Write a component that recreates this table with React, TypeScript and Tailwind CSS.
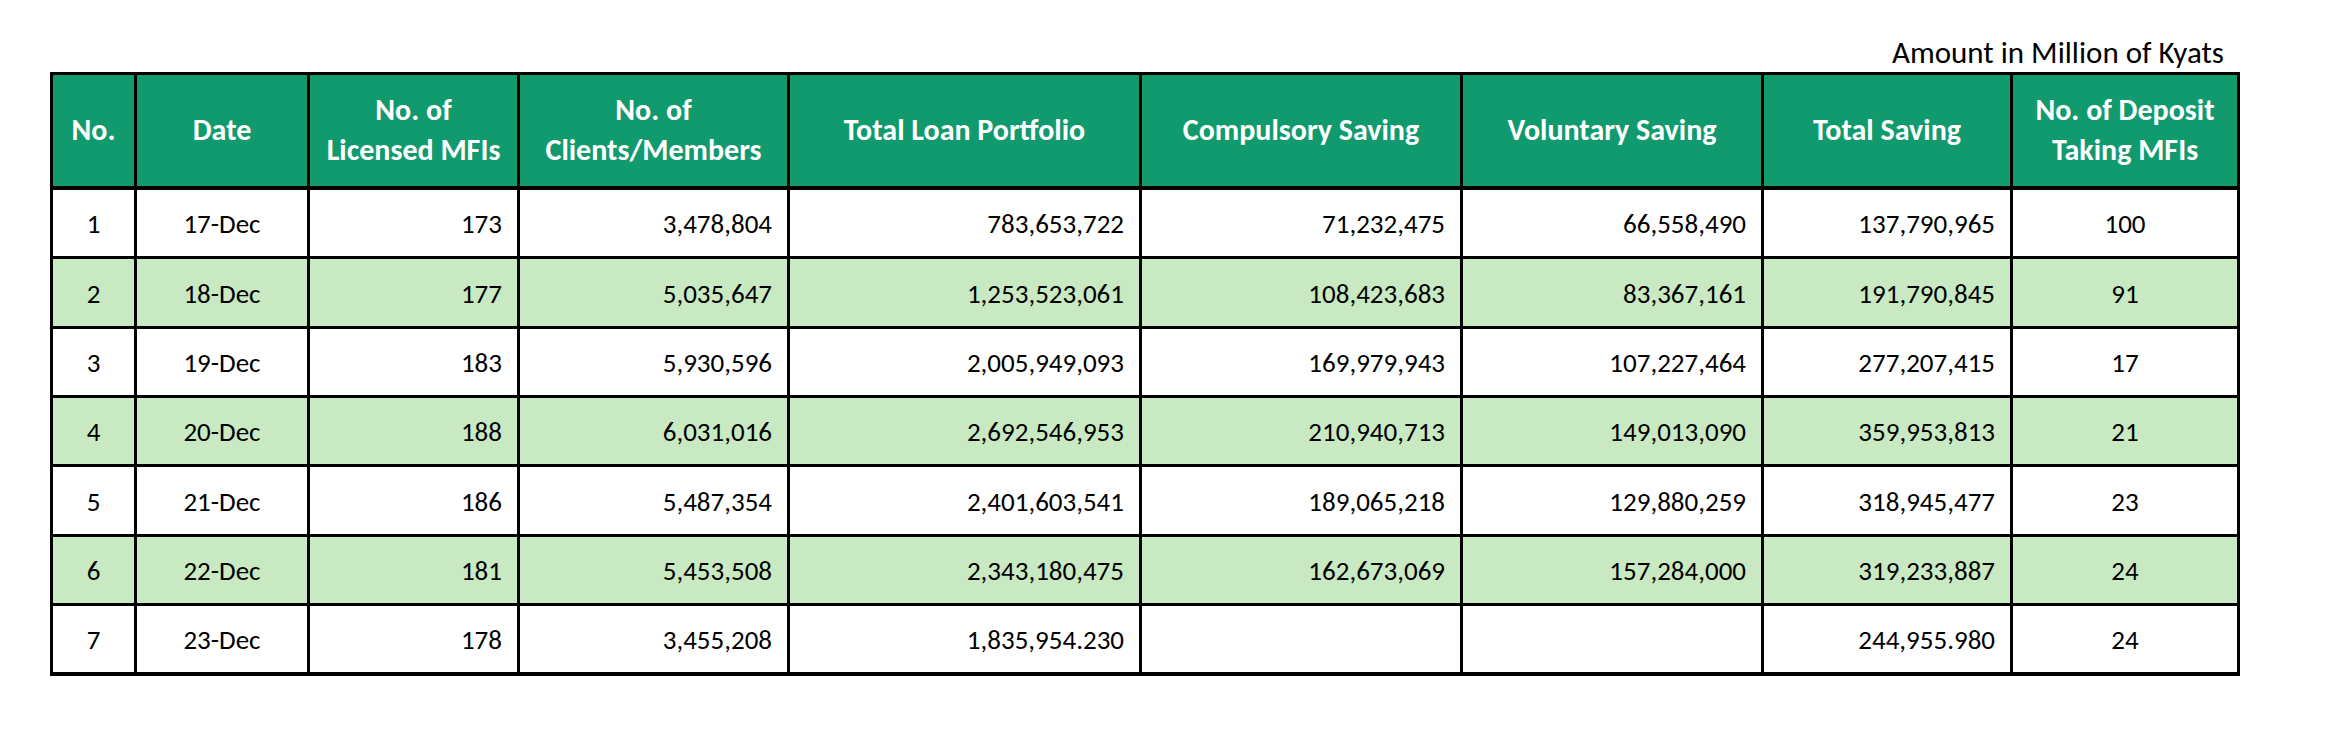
const headers: string[][] = [
  ["No."],
  ["Date"],
  ["No. of", "Licensed MFIs"],
  ["No. of", "Clients/Members"],
  ["Total Loan Portfolio"],
  ["Compulsory Saving"],
  ["Voluntary Saving"],
  ["Total Saving"],
  ["No. of Deposit", "Taking MFIs"],
];

// which columns are right-aligned in the body
const rightCols = [2, 3, 4, 5, 6, 7];

const rows: string[][] = [
  ["1", "17-Dec", "173", "3,478,804", "783,653,722", "71,232,475", "66,558,490", "137,790,965", "100"],
  ["2", "18-Dec", "177", "5,035,647", "1,253,523,061", "108,423,683", "83,367,161", "191,790,845", "91"],
  ["3", "19-Dec", "183", "5,930,596", "2,005,949,093", "169,979,943", "107,227,464", "277,207,415", "17"],
  ["4", "20-Dec", "188", "6,031,016", "2,692,546,953", "210,940,713", "149,013,090", "359,953,813", "21"],
  ["5", "21-Dec", "186", "5,487,354", "2,401,603,541", "189,065,218", "129,880,259", "318,945,477", "23"],
  ["6", "22-Dec", "181", "5,453,508", "2,343,180,475", "162,673,069", "157,284,000", "319,233,887", "24"],
  ["7", "23-Dec", "178", "3,455,208", "1,835,954.230", "", "", "244,955.980", "24"],
];

export default function App() {
  return (
    <div
      className="w-[2338px] h-[745px] bg-white text-black"
      style={{ fontFamily: "Carlito, Calibri, Lato, 'Open Sans', sans-serif" }}
    >
      <div className="pl-[50px] pt-[32px]">
        <div className="w-[2190px] flex justify-end pr-[16px] h-[40px] text-[31px] leading-[40px]">
          Amount in Million of Kyats
        </div>

        <div className="w-[2190px] grid grid-cols-[81px_170px_207px_267px_349px_318px_298px_246px_224px] gap-[3px] bg-black border-[3px] border-black border-b-[4px]">
          {headers.map((h, i) => (
            <div
              key={i}
              className="h-[112px] bg-[#129a6f] border-b-[1px] border-black flex flex-col items-center justify-center text-white font-bold text-[30px] leading-[40px] pb-[1px] text-center"
            >
              {h.map((l) => (
                <span key={l}>{l}</span>
              ))}
            </div>
          ))}

          {rows.map((r, ri) =>
            r.map((cell, ci) => (
              <div
                key={ri + "-" + ci}
                className={
                  "flex items-center pt-[3px] text-[27px] " +
                  (ri === 1 || ri === 4 ? "h-[67px] " : "h-[66px] ") +
                  (ri % 2 === 1 ? "bg-[#c9e9c2] " : "bg-white ") +
                  (rightCols.includes(ci) ? "justify-end pr-[15px]" : "justify-center")
                }
              >
                {cell}
              </div>
            ))
          )}
        </div>
      </div>
    </div>
  );
}
